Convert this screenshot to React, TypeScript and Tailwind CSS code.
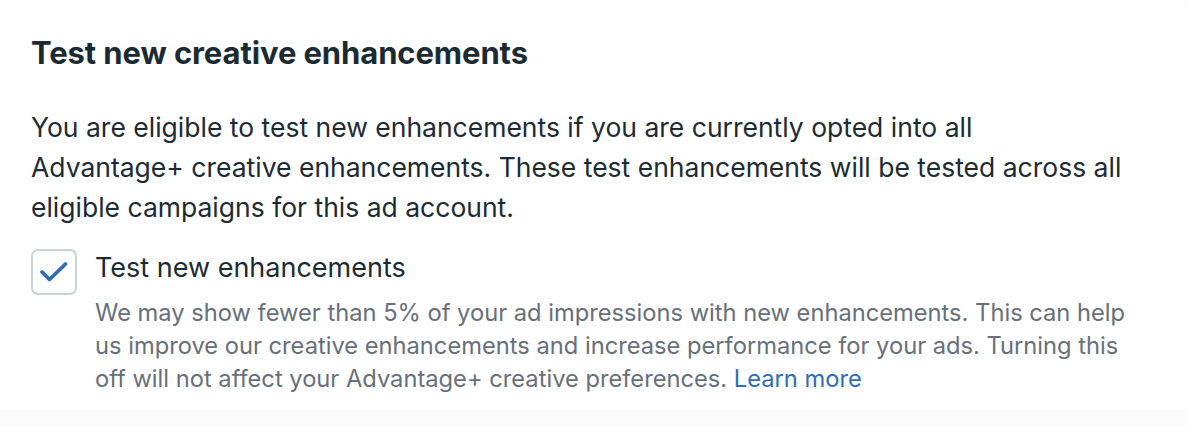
import React from "react";

const CheckIcon: React.FC = () => (
  <svg width="30" height="22" viewBox="0 0 30 22" fill="none">
    <path
      d="M3 11L10.5 18.5L26.5 3"
      stroke="#2f6db5"
      strokeWidth="3.8"
      strokeLinecap="round"
      strokeLinejoin="round"
    />
  </svg>
);

const App: React.FC = () => {
  return (
    <div className="w-[1188px] h-[426px] bg-[#fbfbfc] font-['Inter',sans-serif]">
      <div className="h-[410px] bg-white rounded-tr-[8px] px-[31px] pt-[34px] shadow-[0_1px_4px_rgba(0,0,0,0.03)]">
        <h2 className="text-[31px] leading-[38px] font-bold text-[#1c2b33] tracking-[-0.1px]">
          Test new creative enhancements
        </h2>
        <p className="mt-[35px] text-[26.5px] leading-[40px] text-[#1c2b33] whitespace-nowrap">
          You are eligible to test new enhancements if you are currently opted into all
          <br />
          Advantage+ creative enhancements. These test enhancements will be tested across all
          <br />
          eligible campaigns for this ad account.
        </p>
        <div className="mt-[22px] flex gap-[18px]">
          <div className="w-[46px] h-[46px] shrink-0 rounded-[7px] border-2 border-[#cbd2d9] flex items-center justify-center">
            <CheckIcon />
          </div>
          <div className="pt-[2px]">
            <div className="text-[27px] leading-[34px] text-[#1c2b33]">Test new enhancements</div>
            <p className="mt-[11px] text-[23.7px] leading-[33px] text-[#67707a] whitespace-nowrap">
              We may show fewer than 5% of your ad impressions with new enhancements. This can help
              <br />
              us improve our creative enhancements and increase performance for your ads. Turning this
              <br />
              off will not affect your Advantage+ creative preferences.{" "}
              <a className="text-[#2f6db5]" href="#">
                Learn more
              </a>
            </p>
          </div>
        </div>
      </div>
    </div>
  );
};

export default App;
